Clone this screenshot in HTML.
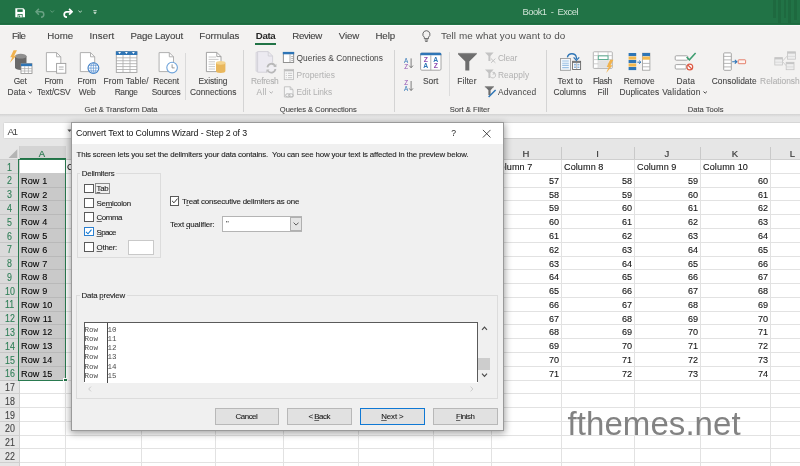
<!DOCTYPE html>
<html><head><meta charset="utf-8"><title>Excel</title>
<style>
html,body{margin:0;padding:0;}
body{width:800px;height:466px;position:relative;overflow:hidden;background:#fff;font-family:"Liberation Sans",sans-serif;}
.t{position:absolute;white-space:pre;display:block;}
.r{position:absolute;display:block;}
u{text-decoration:underline;text-underline-offset:0.6px;text-decoration-thickness:0.5px;text-decoration-color:#666;}
#root{position:absolute;left:0;top:0;width:800px;height:466px;overflow:hidden;background:#fff;will-change:transform;}
</style></head><body>
<div id="root">
<div class="r" style="left:0.00px;top:0.00px;width:800.00px;height:24.50px;background:#217346;"></div>
<div class="r" style="left:0.00px;top:24.50px;width:800.00px;height:89.50px;background:#f3f2f1;"></div>
<div class="r" style="left:0.00px;top:114.00px;width:800.00px;height:3.00px;background:linear-gradient(#d2d2d2,#e6e6e6);"></div>
<div class="r" style="left:0.00px;top:116.50px;width:800.00px;height:30.00px;background:#e6e6e6;"></div>
<div class="r" style="left:773.20px;top:0.00px;width:3.00px;height:18.00px;background:#1e693f;filter:blur(0.4px);"></div>
<div class="r" style="left:778.20px;top:0.00px;width:3.00px;height:24.00px;background:#1e693f;filter:blur(0.4px);"></div>
<div class="r" style="left:783.80px;top:0.00px;width:2.60px;height:18.00px;background:#1e693f;filter:blur(0.4px);"></div>
<div class="r" style="left:788.20px;top:0.00px;width:2.60px;height:24.00px;background:#1e693f;filter:blur(0.4px);"></div>
<div class="r" style="left:793.80px;top:0.00px;width:3.20px;height:20.00px;background:#1e693f;filter:blur(0.4px);"></div>
<div class="r" style="left:0.00px;top:23.40px;width:800.00px;height:1.10px;background:#1d6a3f;"></div>
<div class="r" style="left:0.00px;top:24.50px;width:800.00px;height:1.00px;background:#fbfbfb;"></div>
<div class="r" style="left:0.00px;top:146.30px;width:800.00px;height:13.30px;background:#e6e6e6;"></div>
<div class="r" style="left:0.00px;top:159.60px;width:19.00px;height:306.40px;background:#e6e6e6;"></div>
<div class="r" style="left:19.00px;top:159.60px;width:781.00px;height:306.40px;background:#fff;"></div>
<div class="r" style="left:64.50px;top:147.30px;width:1.00px;height:12.30px;background:#c9c9c9;"></div>
<div class="r" style="left:64.50px;top:159.60px;width:1.00px;height:306.40px;background:#e2e2e2;"></div>
<div class="r" style="left:140.50px;top:147.30px;width:1.00px;height:12.30px;background:#c9c9c9;"></div>
<div class="r" style="left:140.50px;top:159.60px;width:1.00px;height:306.40px;background:#e2e2e2;"></div>
<div class="r" style="left:214.50px;top:147.30px;width:1.00px;height:12.30px;background:#c9c9c9;"></div>
<div class="r" style="left:214.50px;top:159.60px;width:1.00px;height:306.40px;background:#e2e2e2;"></div>
<div class="r" style="left:283.00px;top:147.30px;width:1.00px;height:12.30px;background:#c9c9c9;"></div>
<div class="r" style="left:283.00px;top:159.60px;width:1.00px;height:306.40px;background:#e2e2e2;"></div>
<div class="r" style="left:357.50px;top:147.30px;width:1.00px;height:12.30px;background:#c9c9c9;"></div>
<div class="r" style="left:357.50px;top:159.60px;width:1.00px;height:306.40px;background:#e2e2e2;"></div>
<div class="r" style="left:433.00px;top:147.30px;width:1.00px;height:12.30px;background:#c9c9c9;"></div>
<div class="r" style="left:433.00px;top:159.60px;width:1.00px;height:306.40px;background:#e2e2e2;"></div>
<div class="r" style="left:490.50px;top:147.30px;width:1.00px;height:12.30px;background:#c9c9c9;"></div>
<div class="r" style="left:490.50px;top:159.60px;width:1.00px;height:306.40px;background:#e2e2e2;"></div>
<div class="r" style="left:560.50px;top:147.30px;width:1.00px;height:12.30px;background:#c9c9c9;"></div>
<div class="r" style="left:560.50px;top:159.60px;width:1.00px;height:306.40px;background:#e2e2e2;"></div>
<div class="r" style="left:633.50px;top:147.30px;width:1.00px;height:12.30px;background:#c9c9c9;"></div>
<div class="r" style="left:633.50px;top:159.60px;width:1.00px;height:306.40px;background:#e2e2e2;"></div>
<div class="r" style="left:699.50px;top:147.30px;width:1.00px;height:12.30px;background:#c9c9c9;"></div>
<div class="r" style="left:699.50px;top:159.60px;width:1.00px;height:306.40px;background:#e2e2e2;"></div>
<div class="r" style="left:769.50px;top:147.30px;width:1.00px;height:12.30px;background:#c9c9c9;"></div>
<div class="r" style="left:769.50px;top:159.60px;width:1.00px;height:306.40px;background:#e2e2e2;"></div>
<div class="r" style="left:839.50px;top:147.30px;width:1.00px;height:12.30px;background:#c9c9c9;"></div>
<div class="r" style="left:839.50px;top:159.60px;width:1.00px;height:306.40px;background:#e2e2e2;"></div>
<div class="r" style="left:19.00px;top:172.88px;width:781.00px;height:1.00px;background:#e2e2e2;"></div>
<div class="r" style="left:0.00px;top:172.88px;width:19.00px;height:1.00px;background:#cfcfcf;"></div>
<div class="r" style="left:19.00px;top:186.66px;width:781.00px;height:1.00px;background:#e2e2e2;"></div>
<div class="r" style="left:0.00px;top:186.66px;width:19.00px;height:1.00px;background:#cfcfcf;"></div>
<div class="r" style="left:19.00px;top:200.44px;width:781.00px;height:1.00px;background:#e2e2e2;"></div>
<div class="r" style="left:0.00px;top:200.44px;width:19.00px;height:1.00px;background:#cfcfcf;"></div>
<div class="r" style="left:19.00px;top:214.22px;width:781.00px;height:1.00px;background:#e2e2e2;"></div>
<div class="r" style="left:0.00px;top:214.22px;width:19.00px;height:1.00px;background:#cfcfcf;"></div>
<div class="r" style="left:19.00px;top:228.00px;width:781.00px;height:1.00px;background:#e2e2e2;"></div>
<div class="r" style="left:0.00px;top:228.00px;width:19.00px;height:1.00px;background:#cfcfcf;"></div>
<div class="r" style="left:19.00px;top:241.78px;width:781.00px;height:1.00px;background:#e2e2e2;"></div>
<div class="r" style="left:0.00px;top:241.78px;width:19.00px;height:1.00px;background:#cfcfcf;"></div>
<div class="r" style="left:19.00px;top:255.56px;width:781.00px;height:1.00px;background:#e2e2e2;"></div>
<div class="r" style="left:0.00px;top:255.56px;width:19.00px;height:1.00px;background:#cfcfcf;"></div>
<div class="r" style="left:19.00px;top:269.34px;width:781.00px;height:1.00px;background:#e2e2e2;"></div>
<div class="r" style="left:0.00px;top:269.34px;width:19.00px;height:1.00px;background:#cfcfcf;"></div>
<div class="r" style="left:19.00px;top:283.12px;width:781.00px;height:1.00px;background:#e2e2e2;"></div>
<div class="r" style="left:0.00px;top:283.12px;width:19.00px;height:1.00px;background:#cfcfcf;"></div>
<div class="r" style="left:19.00px;top:296.90px;width:781.00px;height:1.00px;background:#e2e2e2;"></div>
<div class="r" style="left:0.00px;top:296.90px;width:19.00px;height:1.00px;background:#cfcfcf;"></div>
<div class="r" style="left:19.00px;top:310.68px;width:781.00px;height:1.00px;background:#e2e2e2;"></div>
<div class="r" style="left:0.00px;top:310.68px;width:19.00px;height:1.00px;background:#cfcfcf;"></div>
<div class="r" style="left:19.00px;top:324.46px;width:781.00px;height:1.00px;background:#e2e2e2;"></div>
<div class="r" style="left:0.00px;top:324.46px;width:19.00px;height:1.00px;background:#cfcfcf;"></div>
<div class="r" style="left:19.00px;top:338.24px;width:781.00px;height:1.00px;background:#e2e2e2;"></div>
<div class="r" style="left:0.00px;top:338.24px;width:19.00px;height:1.00px;background:#cfcfcf;"></div>
<div class="r" style="left:19.00px;top:352.02px;width:781.00px;height:1.00px;background:#e2e2e2;"></div>
<div class="r" style="left:0.00px;top:352.02px;width:19.00px;height:1.00px;background:#cfcfcf;"></div>
<div class="r" style="left:19.00px;top:365.80px;width:781.00px;height:1.00px;background:#e2e2e2;"></div>
<div class="r" style="left:0.00px;top:365.80px;width:19.00px;height:1.00px;background:#cfcfcf;"></div>
<div class="r" style="left:19.00px;top:379.58px;width:781.00px;height:1.00px;background:#e2e2e2;"></div>
<div class="r" style="left:0.00px;top:379.58px;width:19.00px;height:1.00px;background:#cfcfcf;"></div>
<div class="r" style="left:19.00px;top:393.36px;width:781.00px;height:1.00px;background:#e2e2e2;"></div>
<div class="r" style="left:0.00px;top:393.36px;width:19.00px;height:1.00px;background:#cfcfcf;"></div>
<div class="r" style="left:19.00px;top:407.14px;width:781.00px;height:1.00px;background:#e2e2e2;"></div>
<div class="r" style="left:0.00px;top:407.14px;width:19.00px;height:1.00px;background:#cfcfcf;"></div>
<div class="r" style="left:19.00px;top:420.92px;width:781.00px;height:1.00px;background:#e2e2e2;"></div>
<div class="r" style="left:0.00px;top:420.92px;width:19.00px;height:1.00px;background:#cfcfcf;"></div>
<div class="r" style="left:19.00px;top:434.70px;width:781.00px;height:1.00px;background:#e2e2e2;"></div>
<div class="r" style="left:0.00px;top:434.70px;width:19.00px;height:1.00px;background:#cfcfcf;"></div>
<div class="r" style="left:19.00px;top:448.48px;width:781.00px;height:1.00px;background:#e2e2e2;"></div>
<div class="r" style="left:0.00px;top:448.48px;width:19.00px;height:1.00px;background:#cfcfcf;"></div>
<div class="r" style="left:19.00px;top:462.26px;width:781.00px;height:1.00px;background:#e2e2e2;"></div>
<div class="r" style="left:0.00px;top:462.26px;width:19.00px;height:1.00px;background:#cfcfcf;"></div>
<div class="r" style="left:19.00px;top:476.04px;width:781.00px;height:1.00px;background:#e2e2e2;"></div>
<div class="r" style="left:0.00px;top:476.04px;width:19.00px;height:1.00px;background:#cfcfcf;"></div>
<div class="r" style="left:18.50px;top:146.30px;width:1.00px;height:319.70px;background:#cfcfcf;"></div>
<div class="r" style="left:0.00px;top:159.10px;width:800.00px;height:1.00px;background:#cfcfcf;"></div>
<div class="r" style="left:19.50px;top:146.30px;width:46.00px;height:12.80px;background:#d4d4d4;"></div>
<div class="r" style="left:19.50px;top:158.40px;width:46.00px;height:1.40px;background:#217346;"></div>
<div class="r" style="left:0.00px;top:159.60px;width:18.50px;height:220.48px;background:#dadada;"></div>
<div class="r" style="left:0.00px;top:172.88px;width:18.50px;height:1.00px;background:#c6c6c6;"></div>
<div class="r" style="left:0.00px;top:186.66px;width:18.50px;height:1.00px;background:#c6c6c6;"></div>
<div class="r" style="left:0.00px;top:200.44px;width:18.50px;height:1.00px;background:#c6c6c6;"></div>
<div class="r" style="left:0.00px;top:214.22px;width:18.50px;height:1.00px;background:#c6c6c6;"></div>
<div class="r" style="left:0.00px;top:228.00px;width:18.50px;height:1.00px;background:#c6c6c6;"></div>
<div class="r" style="left:0.00px;top:241.78px;width:18.50px;height:1.00px;background:#c6c6c6;"></div>
<div class="r" style="left:0.00px;top:255.56px;width:18.50px;height:1.00px;background:#c6c6c6;"></div>
<div class="r" style="left:0.00px;top:269.34px;width:18.50px;height:1.00px;background:#c6c6c6;"></div>
<div class="r" style="left:0.00px;top:283.12px;width:18.50px;height:1.00px;background:#c6c6c6;"></div>
<div class="r" style="left:0.00px;top:296.90px;width:18.50px;height:1.00px;background:#c6c6c6;"></div>
<div class="r" style="left:0.00px;top:310.68px;width:18.50px;height:1.00px;background:#c6c6c6;"></div>
<div class="r" style="left:0.00px;top:324.46px;width:18.50px;height:1.00px;background:#c6c6c6;"></div>
<div class="r" style="left:0.00px;top:338.24px;width:18.50px;height:1.00px;background:#c6c6c6;"></div>
<div class="r" style="left:0.00px;top:352.02px;width:18.50px;height:1.00px;background:#c6c6c6;"></div>
<div class="r" style="left:0.00px;top:365.80px;width:18.50px;height:1.00px;background:#c6c6c6;"></div>
<div class="r" style="left:0.00px;top:379.58px;width:18.50px;height:1.00px;background:#c6c6c6;"></div>
<div class="r" style="left:19.50px;top:173.38px;width:46.00px;height:206.70px;background:#c9c9c9;"></div>
<div class="r" style="left:19.50px;top:186.66px;width:46.00px;height:1.00px;background:#b9b9b9;"></div>
<div class="r" style="left:19.50px;top:200.44px;width:46.00px;height:1.00px;background:#b9b9b9;"></div>
<div class="r" style="left:19.50px;top:214.22px;width:46.00px;height:1.00px;background:#b9b9b9;"></div>
<div class="r" style="left:19.50px;top:228.00px;width:46.00px;height:1.00px;background:#b9b9b9;"></div>
<div class="r" style="left:19.50px;top:241.78px;width:46.00px;height:1.00px;background:#b9b9b9;"></div>
<div class="r" style="left:19.50px;top:255.56px;width:46.00px;height:1.00px;background:#b9b9b9;"></div>
<div class="r" style="left:19.50px;top:269.34px;width:46.00px;height:1.00px;background:#b9b9b9;"></div>
<div class="r" style="left:19.50px;top:283.12px;width:46.00px;height:1.00px;background:#b9b9b9;"></div>
<div class="r" style="left:19.50px;top:296.90px;width:46.00px;height:1.00px;background:#b9b9b9;"></div>
<div class="r" style="left:19.50px;top:310.68px;width:46.00px;height:1.00px;background:#b9b9b9;"></div>
<div class="r" style="left:19.50px;top:324.46px;width:46.00px;height:1.00px;background:#b9b9b9;"></div>
<div class="r" style="left:19.50px;top:338.24px;width:46.00px;height:1.00px;background:#b9b9b9;"></div>
<div class="r" style="left:19.50px;top:352.02px;width:46.00px;height:1.00px;background:#b9b9b9;"></div>
<div class="r" style="left:19.50px;top:365.80px;width:46.00px;height:1.00px;background:#b9b9b9;"></div>
<div class="r" style="left:18.30px;top:158.90px;width:48.00px;height:221.88px;box-sizing:border-box;border:1.2px solid #2a7a50;"></div>
<div class="r" style="left:64.40px;top:378.78px;width:2.70px;height:2.70px;background:#217346;outline:0.5px solid #fff;"></div>
<svg class="r" style="left:8.00px;top:148.50px" width="10" height="9.5" viewBox="0 0 10 9.5"><path d="M9.3 0.3V9H0.6Z" fill="#b4b4b4"/></svg>
<span class="t" style="left:38.83px;top:149.06px;font-size:9.50px;line-height:9.50px;color:#2a7a50;-webkit-text-stroke:0.2px;">A</span>
<span class="t" style="left:522.57px;top:149.06px;font-size:9.50px;line-height:9.50px;color:#3a3a3a;-webkit-text-stroke:0.2px;">H</span>
<span class="t" style="left:596.18px;top:149.06px;font-size:9.50px;line-height:9.50px;color:#3a3a3a;-webkit-text-stroke:0.2px;">I</span>
<span class="t" style="left:664.62px;top:149.06px;font-size:9.50px;line-height:9.50px;color:#3a3a3a;-webkit-text-stroke:0.2px;">J</span>
<span class="t" style="left:731.83px;top:149.06px;font-size:9.50px;line-height:9.50px;color:#3a3a3a;-webkit-text-stroke:0.2px;">K</span>
<span class="t" style="left:789.86px;top:149.06px;font-size:9.50px;line-height:9.50px;color:#3a3a3a;-webkit-text-stroke:0.2px;">L</span>
<span class="t" style="left:7.24px;top:162.66px;font-size:10.30px;line-height:10.30px;color:#2f7f57;transform:scaleX(0.860);transform-origin:0 50%;-webkit-text-stroke:0.12px;">1</span>
<span class="t" style="left:7.24px;top:176.44px;font-size:10.30px;line-height:10.30px;color:#2f7f57;transform:scaleX(0.860);transform-origin:0 50%;-webkit-text-stroke:0.12px;">2</span>
<span class="t" style="left:7.24px;top:190.22px;font-size:10.30px;line-height:10.30px;color:#2f7f57;transform:scaleX(0.860);transform-origin:0 50%;-webkit-text-stroke:0.12px;">3</span>
<span class="t" style="left:7.24px;top:204.00px;font-size:10.30px;line-height:10.30px;color:#2f7f57;transform:scaleX(0.860);transform-origin:0 50%;-webkit-text-stroke:0.12px;">4</span>
<span class="t" style="left:7.24px;top:217.78px;font-size:10.30px;line-height:10.30px;color:#2f7f57;transform:scaleX(0.860);transform-origin:0 50%;-webkit-text-stroke:0.12px;">5</span>
<span class="t" style="left:7.24px;top:231.56px;font-size:10.30px;line-height:10.30px;color:#2f7f57;transform:scaleX(0.860);transform-origin:0 50%;-webkit-text-stroke:0.12px;">6</span>
<span class="t" style="left:7.24px;top:245.34px;font-size:10.30px;line-height:10.30px;color:#2f7f57;transform:scaleX(0.860);transform-origin:0 50%;-webkit-text-stroke:0.12px;">7</span>
<span class="t" style="left:7.24px;top:259.12px;font-size:10.30px;line-height:10.30px;color:#2f7f57;transform:scaleX(0.860);transform-origin:0 50%;-webkit-text-stroke:0.12px;">8</span>
<span class="t" style="left:7.24px;top:272.90px;font-size:10.30px;line-height:10.30px;color:#2f7f57;transform:scaleX(0.860);transform-origin:0 50%;-webkit-text-stroke:0.12px;">9</span>
<span class="t" style="left:4.77px;top:286.68px;font-size:10.30px;line-height:10.30px;color:#2f7f57;letter-spacing:-0.000px;transform:scaleX(0.860);transform-origin:0 50%;-webkit-text-stroke:0.12px;">10</span>
<span class="t" style="left:5.10px;top:300.46px;font-size:10.30px;line-height:10.30px;color:#2f7f57;transform:scaleX(0.860);transform-origin:0 50%;-webkit-text-stroke:0.12px;">11</span>
<span class="t" style="left:4.77px;top:314.24px;font-size:10.30px;line-height:10.30px;color:#2f7f57;letter-spacing:-0.000px;transform:scaleX(0.860);transform-origin:0 50%;-webkit-text-stroke:0.12px;">12</span>
<span class="t" style="left:4.77px;top:328.02px;font-size:10.30px;line-height:10.30px;color:#2f7f57;letter-spacing:-0.000px;transform:scaleX(0.860);transform-origin:0 50%;-webkit-text-stroke:0.12px;">13</span>
<span class="t" style="left:4.77px;top:341.80px;font-size:10.30px;line-height:10.30px;color:#2f7f57;letter-spacing:-0.000px;transform:scaleX(0.860);transform-origin:0 50%;-webkit-text-stroke:0.12px;">14</span>
<span class="t" style="left:4.77px;top:355.58px;font-size:10.30px;line-height:10.30px;color:#2f7f57;letter-spacing:-0.000px;transform:scaleX(0.860);transform-origin:0 50%;-webkit-text-stroke:0.12px;">15</span>
<span class="t" style="left:4.77px;top:369.36px;font-size:10.30px;line-height:10.30px;color:#2f7f57;letter-spacing:-0.000px;transform:scaleX(0.860);transform-origin:0 50%;-webkit-text-stroke:0.12px;">16</span>
<span class="t" style="left:4.77px;top:383.14px;font-size:10.30px;line-height:10.30px;color:#444;letter-spacing:-0.000px;transform:scaleX(0.860);transform-origin:0 50%;-webkit-text-stroke:0.12px;">17</span>
<span class="t" style="left:4.77px;top:396.92px;font-size:10.30px;line-height:10.30px;color:#444;letter-spacing:-0.000px;transform:scaleX(0.860);transform-origin:0 50%;-webkit-text-stroke:0.12px;">18</span>
<span class="t" style="left:4.77px;top:410.70px;font-size:10.30px;line-height:10.30px;color:#444;letter-spacing:-0.000px;transform:scaleX(0.860);transform-origin:0 50%;-webkit-text-stroke:0.12px;">19</span>
<span class="t" style="left:4.77px;top:424.48px;font-size:10.30px;line-height:10.30px;color:#444;letter-spacing:-0.000px;transform:scaleX(0.860);transform-origin:0 50%;-webkit-text-stroke:0.12px;">20</span>
<span class="t" style="left:4.77px;top:438.26px;font-size:10.30px;line-height:10.30px;color:#444;letter-spacing:-0.000px;transform:scaleX(0.860);transform-origin:0 50%;-webkit-text-stroke:0.12px;">21</span>
<span class="t" style="left:4.77px;top:452.04px;font-size:10.30px;line-height:10.30px;color:#444;letter-spacing:-0.000px;transform:scaleX(0.860);transform-origin:0 50%;-webkit-text-stroke:0.12px;">22</span>
<span class="t" style="left:20.90px;top:175.83px;font-size:9.90px;line-height:9.90px;color:#000;letter-spacing:0.132px;transform:scaleX(0.920);transform-origin:0 50%;-webkit-text-stroke:0.1px;">Row 1</span>
<span class="t" style="left:20.90px;top:189.61px;font-size:9.90px;line-height:9.90px;color:#000;letter-spacing:0.132px;transform:scaleX(0.920);transform-origin:0 50%;-webkit-text-stroke:0.1px;">Row 2</span>
<span class="t" style="left:20.90px;top:203.39px;font-size:9.90px;line-height:9.90px;color:#000;letter-spacing:0.132px;transform:scaleX(0.920);transform-origin:0 50%;-webkit-text-stroke:0.1px;">Row 3</span>
<span class="t" style="left:20.90px;top:217.17px;font-size:9.90px;line-height:9.90px;color:#000;letter-spacing:0.132px;transform:scaleX(0.920);transform-origin:0 50%;-webkit-text-stroke:0.1px;">Row 4</span>
<span class="t" style="left:20.90px;top:230.95px;font-size:9.90px;line-height:9.90px;color:#000;letter-spacing:0.132px;transform:scaleX(0.920);transform-origin:0 50%;-webkit-text-stroke:0.1px;">Row 5</span>
<span class="t" style="left:20.90px;top:244.73px;font-size:9.90px;line-height:9.90px;color:#000;letter-spacing:0.132px;transform:scaleX(0.920);transform-origin:0 50%;-webkit-text-stroke:0.1px;">Row 6</span>
<span class="t" style="left:20.90px;top:258.51px;font-size:9.90px;line-height:9.90px;color:#000;letter-spacing:0.132px;transform:scaleX(0.920);transform-origin:0 50%;-webkit-text-stroke:0.1px;">Row 7</span>
<span class="t" style="left:20.90px;top:272.29px;font-size:9.90px;line-height:9.90px;color:#000;letter-spacing:0.132px;transform:scaleX(0.920);transform-origin:0 50%;-webkit-text-stroke:0.1px;">Row 8</span>
<span class="t" style="left:20.90px;top:286.07px;font-size:9.90px;line-height:9.90px;color:#000;letter-spacing:0.132px;transform:scaleX(0.920);transform-origin:0 50%;-webkit-text-stroke:0.1px;">Row 9</span>
<span class="t" style="left:20.90px;top:299.85px;font-size:9.90px;line-height:9.90px;color:#000;letter-spacing:0.135px;transform:scaleX(0.920);transform-origin:0 50%;-webkit-text-stroke:0.1px;">Row 10</span>
<span class="t" style="left:20.90px;top:313.63px;font-size:9.90px;line-height:9.90px;color:#000;letter-spacing:0.282px;transform:scaleX(0.920);transform-origin:0 50%;-webkit-text-stroke:0.1px;">Row 11</span>
<span class="t" style="left:20.90px;top:327.41px;font-size:9.90px;line-height:9.90px;color:#000;letter-spacing:0.135px;transform:scaleX(0.920);transform-origin:0 50%;-webkit-text-stroke:0.1px;">Row 12</span>
<span class="t" style="left:20.90px;top:341.19px;font-size:9.90px;line-height:9.90px;color:#000;letter-spacing:0.135px;transform:scaleX(0.920);transform-origin:0 50%;-webkit-text-stroke:0.1px;">Row 13</span>
<span class="t" style="left:20.90px;top:354.97px;font-size:9.90px;line-height:9.90px;color:#000;letter-spacing:0.135px;transform:scaleX(0.920);transform-origin:0 50%;-webkit-text-stroke:0.1px;">Row 14</span>
<span class="t" style="left:20.90px;top:368.75px;font-size:9.90px;line-height:9.90px;color:#000;letter-spacing:0.135px;transform:scaleX(0.920);transform-origin:0 50%;-webkit-text-stroke:0.1px;">Row 15</span>
<span class="t" style="left:66.50px;top:162.05px;font-size:9.90px;line-height:9.90px;color:#111;transform:scaleX(0.920);transform-origin:0 50%;-webkit-text-stroke:0.1px;">C</span>
<span class="t" style="left:492.60px;top:162.05px;font-size:9.90px;line-height:9.90px;color:#111;letter-spacing:0.066px;transform:scaleX(0.920);transform-origin:0 50%;-webkit-text-stroke:0.1px;">Column 7</span>
<span class="t" style="left:563.50px;top:162.05px;font-size:9.90px;line-height:9.90px;color:#111;letter-spacing:0.081px;transform:scaleX(0.920);transform-origin:0 50%;-webkit-text-stroke:0.1px;">Column 8</span>
<span class="t" style="left:636.50px;top:162.05px;font-size:9.90px;line-height:9.90px;color:#111;letter-spacing:0.081px;transform:scaleX(0.920);transform-origin:0 50%;-webkit-text-stroke:0.1px;">Column 9</span>
<span class="t" style="left:702.50px;top:162.05px;font-size:9.90px;line-height:9.90px;color:#111;letter-spacing:0.130px;transform:scaleX(0.920);transform-origin:0 50%;-webkit-text-stroke:0.1px;">Column 10</span>
<span class="t" style="left:548.80px;top:175.83px;font-size:9.90px;line-height:9.90px;color:#111;letter-spacing:0.076px;transform:scaleX(0.920);transform-origin:0 50%;-webkit-text-stroke:0.1px;">57</span>
<span class="t" style="left:621.80px;top:175.83px;font-size:9.90px;line-height:9.90px;color:#111;letter-spacing:0.076px;transform:scaleX(0.920);transform-origin:0 50%;-webkit-text-stroke:0.1px;">58</span>
<span class="t" style="left:687.80px;top:175.83px;font-size:9.90px;line-height:9.90px;color:#111;letter-spacing:0.076px;transform:scaleX(0.920);transform-origin:0 50%;-webkit-text-stroke:0.1px;">59</span>
<span class="t" style="left:757.80px;top:175.83px;font-size:9.90px;line-height:9.90px;color:#111;letter-spacing:0.076px;transform:scaleX(0.920);transform-origin:0 50%;-webkit-text-stroke:0.1px;">60</span>
<span class="t" style="left:548.80px;top:189.61px;font-size:9.90px;line-height:9.90px;color:#111;letter-spacing:0.076px;transform:scaleX(0.920);transform-origin:0 50%;-webkit-text-stroke:0.1px;">58</span>
<span class="t" style="left:621.80px;top:189.61px;font-size:9.90px;line-height:9.90px;color:#111;letter-spacing:0.076px;transform:scaleX(0.920);transform-origin:0 50%;-webkit-text-stroke:0.1px;">59</span>
<span class="t" style="left:687.80px;top:189.61px;font-size:9.90px;line-height:9.90px;color:#111;letter-spacing:0.076px;transform:scaleX(0.920);transform-origin:0 50%;-webkit-text-stroke:0.1px;">60</span>
<span class="t" style="left:757.80px;top:189.61px;font-size:9.90px;line-height:9.90px;color:#111;letter-spacing:0.076px;transform:scaleX(0.920);transform-origin:0 50%;-webkit-text-stroke:0.1px;">61</span>
<span class="t" style="left:548.80px;top:203.39px;font-size:9.90px;line-height:9.90px;color:#111;letter-spacing:0.076px;transform:scaleX(0.920);transform-origin:0 50%;-webkit-text-stroke:0.1px;">59</span>
<span class="t" style="left:621.80px;top:203.39px;font-size:9.90px;line-height:9.90px;color:#111;letter-spacing:0.076px;transform:scaleX(0.920);transform-origin:0 50%;-webkit-text-stroke:0.1px;">60</span>
<span class="t" style="left:687.80px;top:203.39px;font-size:9.90px;line-height:9.90px;color:#111;letter-spacing:0.076px;transform:scaleX(0.920);transform-origin:0 50%;-webkit-text-stroke:0.1px;">61</span>
<span class="t" style="left:757.80px;top:203.39px;font-size:9.90px;line-height:9.90px;color:#111;letter-spacing:0.076px;transform:scaleX(0.920);transform-origin:0 50%;-webkit-text-stroke:0.1px;">62</span>
<span class="t" style="left:548.80px;top:217.17px;font-size:9.90px;line-height:9.90px;color:#111;letter-spacing:0.076px;transform:scaleX(0.920);transform-origin:0 50%;-webkit-text-stroke:0.1px;">60</span>
<span class="t" style="left:621.80px;top:217.17px;font-size:9.90px;line-height:9.90px;color:#111;letter-spacing:0.076px;transform:scaleX(0.920);transform-origin:0 50%;-webkit-text-stroke:0.1px;">61</span>
<span class="t" style="left:687.80px;top:217.17px;font-size:9.90px;line-height:9.90px;color:#111;letter-spacing:0.076px;transform:scaleX(0.920);transform-origin:0 50%;-webkit-text-stroke:0.1px;">62</span>
<span class="t" style="left:757.80px;top:217.17px;font-size:9.90px;line-height:9.90px;color:#111;letter-spacing:0.076px;transform:scaleX(0.920);transform-origin:0 50%;-webkit-text-stroke:0.1px;">63</span>
<span class="t" style="left:548.80px;top:230.95px;font-size:9.90px;line-height:9.90px;color:#111;letter-spacing:0.076px;transform:scaleX(0.920);transform-origin:0 50%;-webkit-text-stroke:0.1px;">61</span>
<span class="t" style="left:621.80px;top:230.95px;font-size:9.90px;line-height:9.90px;color:#111;letter-spacing:0.076px;transform:scaleX(0.920);transform-origin:0 50%;-webkit-text-stroke:0.1px;">62</span>
<span class="t" style="left:687.80px;top:230.95px;font-size:9.90px;line-height:9.90px;color:#111;letter-spacing:0.076px;transform:scaleX(0.920);transform-origin:0 50%;-webkit-text-stroke:0.1px;">63</span>
<span class="t" style="left:757.80px;top:230.95px;font-size:9.90px;line-height:9.90px;color:#111;letter-spacing:0.076px;transform:scaleX(0.920);transform-origin:0 50%;-webkit-text-stroke:0.1px;">64</span>
<span class="t" style="left:548.80px;top:244.73px;font-size:9.90px;line-height:9.90px;color:#111;letter-spacing:0.076px;transform:scaleX(0.920);transform-origin:0 50%;-webkit-text-stroke:0.1px;">62</span>
<span class="t" style="left:621.80px;top:244.73px;font-size:9.90px;line-height:9.90px;color:#111;letter-spacing:0.076px;transform:scaleX(0.920);transform-origin:0 50%;-webkit-text-stroke:0.1px;">63</span>
<span class="t" style="left:687.80px;top:244.73px;font-size:9.90px;line-height:9.90px;color:#111;letter-spacing:0.076px;transform:scaleX(0.920);transform-origin:0 50%;-webkit-text-stroke:0.1px;">64</span>
<span class="t" style="left:757.80px;top:244.73px;font-size:9.90px;line-height:9.90px;color:#111;letter-spacing:0.076px;transform:scaleX(0.920);transform-origin:0 50%;-webkit-text-stroke:0.1px;">65</span>
<span class="t" style="left:548.80px;top:258.51px;font-size:9.90px;line-height:9.90px;color:#111;letter-spacing:0.076px;transform:scaleX(0.920);transform-origin:0 50%;-webkit-text-stroke:0.1px;">63</span>
<span class="t" style="left:621.80px;top:258.51px;font-size:9.90px;line-height:9.90px;color:#111;letter-spacing:0.076px;transform:scaleX(0.920);transform-origin:0 50%;-webkit-text-stroke:0.1px;">64</span>
<span class="t" style="left:687.80px;top:258.51px;font-size:9.90px;line-height:9.90px;color:#111;letter-spacing:0.076px;transform:scaleX(0.920);transform-origin:0 50%;-webkit-text-stroke:0.1px;">65</span>
<span class="t" style="left:757.80px;top:258.51px;font-size:9.90px;line-height:9.90px;color:#111;letter-spacing:0.076px;transform:scaleX(0.920);transform-origin:0 50%;-webkit-text-stroke:0.1px;">66</span>
<span class="t" style="left:548.80px;top:272.29px;font-size:9.90px;line-height:9.90px;color:#111;letter-spacing:0.076px;transform:scaleX(0.920);transform-origin:0 50%;-webkit-text-stroke:0.1px;">64</span>
<span class="t" style="left:621.80px;top:272.29px;font-size:9.90px;line-height:9.90px;color:#111;letter-spacing:0.076px;transform:scaleX(0.920);transform-origin:0 50%;-webkit-text-stroke:0.1px;">65</span>
<span class="t" style="left:687.80px;top:272.29px;font-size:9.90px;line-height:9.90px;color:#111;letter-spacing:0.076px;transform:scaleX(0.920);transform-origin:0 50%;-webkit-text-stroke:0.1px;">66</span>
<span class="t" style="left:757.80px;top:272.29px;font-size:9.90px;line-height:9.90px;color:#111;letter-spacing:0.076px;transform:scaleX(0.920);transform-origin:0 50%;-webkit-text-stroke:0.1px;">67</span>
<span class="t" style="left:548.80px;top:286.07px;font-size:9.90px;line-height:9.90px;color:#111;letter-spacing:0.076px;transform:scaleX(0.920);transform-origin:0 50%;-webkit-text-stroke:0.1px;">65</span>
<span class="t" style="left:621.80px;top:286.07px;font-size:9.90px;line-height:9.90px;color:#111;letter-spacing:0.076px;transform:scaleX(0.920);transform-origin:0 50%;-webkit-text-stroke:0.1px;">66</span>
<span class="t" style="left:687.80px;top:286.07px;font-size:9.90px;line-height:9.90px;color:#111;letter-spacing:0.076px;transform:scaleX(0.920);transform-origin:0 50%;-webkit-text-stroke:0.1px;">67</span>
<span class="t" style="left:757.80px;top:286.07px;font-size:9.90px;line-height:9.90px;color:#111;letter-spacing:0.076px;transform:scaleX(0.920);transform-origin:0 50%;-webkit-text-stroke:0.1px;">68</span>
<span class="t" style="left:548.80px;top:299.85px;font-size:9.90px;line-height:9.90px;color:#111;letter-spacing:0.076px;transform:scaleX(0.920);transform-origin:0 50%;-webkit-text-stroke:0.1px;">66</span>
<span class="t" style="left:621.80px;top:299.85px;font-size:9.90px;line-height:9.90px;color:#111;letter-spacing:0.076px;transform:scaleX(0.920);transform-origin:0 50%;-webkit-text-stroke:0.1px;">67</span>
<span class="t" style="left:687.80px;top:299.85px;font-size:9.90px;line-height:9.90px;color:#111;letter-spacing:0.076px;transform:scaleX(0.920);transform-origin:0 50%;-webkit-text-stroke:0.1px;">68</span>
<span class="t" style="left:757.80px;top:299.85px;font-size:9.90px;line-height:9.90px;color:#111;letter-spacing:0.076px;transform:scaleX(0.920);transform-origin:0 50%;-webkit-text-stroke:0.1px;">69</span>
<span class="t" style="left:548.80px;top:313.63px;font-size:9.90px;line-height:9.90px;color:#111;letter-spacing:0.076px;transform:scaleX(0.920);transform-origin:0 50%;-webkit-text-stroke:0.1px;">67</span>
<span class="t" style="left:621.80px;top:313.63px;font-size:9.90px;line-height:9.90px;color:#111;letter-spacing:0.076px;transform:scaleX(0.920);transform-origin:0 50%;-webkit-text-stroke:0.1px;">68</span>
<span class="t" style="left:687.80px;top:313.63px;font-size:9.90px;line-height:9.90px;color:#111;letter-spacing:0.076px;transform:scaleX(0.920);transform-origin:0 50%;-webkit-text-stroke:0.1px;">69</span>
<span class="t" style="left:757.80px;top:313.63px;font-size:9.90px;line-height:9.90px;color:#111;letter-spacing:0.076px;transform:scaleX(0.920);transform-origin:0 50%;-webkit-text-stroke:0.1px;">70</span>
<span class="t" style="left:548.80px;top:327.41px;font-size:9.90px;line-height:9.90px;color:#111;letter-spacing:0.076px;transform:scaleX(0.920);transform-origin:0 50%;-webkit-text-stroke:0.1px;">68</span>
<span class="t" style="left:621.80px;top:327.41px;font-size:9.90px;line-height:9.90px;color:#111;letter-spacing:0.076px;transform:scaleX(0.920);transform-origin:0 50%;-webkit-text-stroke:0.1px;">69</span>
<span class="t" style="left:687.80px;top:327.41px;font-size:9.90px;line-height:9.90px;color:#111;letter-spacing:0.076px;transform:scaleX(0.920);transform-origin:0 50%;-webkit-text-stroke:0.1px;">70</span>
<span class="t" style="left:757.80px;top:327.41px;font-size:9.90px;line-height:9.90px;color:#111;letter-spacing:0.076px;transform:scaleX(0.920);transform-origin:0 50%;-webkit-text-stroke:0.1px;">71</span>
<span class="t" style="left:548.80px;top:341.19px;font-size:9.90px;line-height:9.90px;color:#111;letter-spacing:0.076px;transform:scaleX(0.920);transform-origin:0 50%;-webkit-text-stroke:0.1px;">69</span>
<span class="t" style="left:621.80px;top:341.19px;font-size:9.90px;line-height:9.90px;color:#111;letter-spacing:0.076px;transform:scaleX(0.920);transform-origin:0 50%;-webkit-text-stroke:0.1px;">70</span>
<span class="t" style="left:687.80px;top:341.19px;font-size:9.90px;line-height:9.90px;color:#111;letter-spacing:0.076px;transform:scaleX(0.920);transform-origin:0 50%;-webkit-text-stroke:0.1px;">71</span>
<span class="t" style="left:757.80px;top:341.19px;font-size:9.90px;line-height:9.90px;color:#111;letter-spacing:0.076px;transform:scaleX(0.920);transform-origin:0 50%;-webkit-text-stroke:0.1px;">72</span>
<span class="t" style="left:548.80px;top:354.97px;font-size:9.90px;line-height:9.90px;color:#111;letter-spacing:0.076px;transform:scaleX(0.920);transform-origin:0 50%;-webkit-text-stroke:0.1px;">70</span>
<span class="t" style="left:621.80px;top:354.97px;font-size:9.90px;line-height:9.90px;color:#111;letter-spacing:0.076px;transform:scaleX(0.920);transform-origin:0 50%;-webkit-text-stroke:0.1px;">71</span>
<span class="t" style="left:687.80px;top:354.97px;font-size:9.90px;line-height:9.90px;color:#111;letter-spacing:0.076px;transform:scaleX(0.920);transform-origin:0 50%;-webkit-text-stroke:0.1px;">72</span>
<span class="t" style="left:757.80px;top:354.97px;font-size:9.90px;line-height:9.90px;color:#111;letter-spacing:0.076px;transform:scaleX(0.920);transform-origin:0 50%;-webkit-text-stroke:0.1px;">73</span>
<span class="t" style="left:548.80px;top:368.75px;font-size:9.90px;line-height:9.90px;color:#111;letter-spacing:0.076px;transform:scaleX(0.920);transform-origin:0 50%;-webkit-text-stroke:0.1px;">71</span>
<span class="t" style="left:621.80px;top:368.75px;font-size:9.90px;line-height:9.90px;color:#111;letter-spacing:0.076px;transform:scaleX(0.920);transform-origin:0 50%;-webkit-text-stroke:0.1px;">72</span>
<span class="t" style="left:687.80px;top:368.75px;font-size:9.90px;line-height:9.90px;color:#111;letter-spacing:0.076px;transform:scaleX(0.920);transform-origin:0 50%;-webkit-text-stroke:0.1px;">73</span>
<span class="t" style="left:757.80px;top:368.75px;font-size:9.90px;line-height:9.90px;color:#111;letter-spacing:0.076px;transform:scaleX(0.920);transform-origin:0 50%;-webkit-text-stroke:0.1px;">74</span>
<span class="t" style="left:522.50px;top:7.11px;font-size:9.40px;line-height:9.40px;color:#cfe3d6;letter-spacing:-0.501px;">Book1  -  Excel</span>
<svg class="r" style="left:15.00px;top:8.30px" width="10.4" height="9.6" viewBox="0 0 10.4 9.6"><path d="M0.3 0.3H8.4L10.1 2V9.3H0.3Z" fill="#fff"/><rect x="2.3" y="1.3" width="5.4" height="2.6" fill="#217346"/><rect x="2.6" y="6" width="5" height="3.3" fill="#217346"/><rect x="3.4" y="6.8" width="3.4" height="2.5" fill="#fff"/><rect x="4.1" y="7.5" width="1.1" height="1.8" fill="#217346"/></svg>
<svg class="r" style="left:35.00px;top:8.00px" width="11" height="10" viewBox="0 0 11 10"><path d="M1.2 3.8H6.2C9.6 3.8 9.8 8.9 6 9.2" fill="none" stroke="#69a283" stroke-width="1.5"/><path d="M3.9 0.9L1 3.8L3.9 6.7" fill="none" stroke="#69a283" stroke-width="1.5"/></svg>
<svg class="r" style="left:50.30px;top:10.40px" width="4.4" height="3.2" viewBox="0 0 4.4 3.2"><path d="M0.4 0.5L2.2 2.4L4 0.5" fill="none" stroke="#69a283" stroke-width="0.9"/></svg>
<svg class="r" style="left:62.00px;top:8.00px" width="11" height="10" viewBox="0 0 11 10"><path d="M9.8 3.8H4.8C1.4 3.8 1.2 8.9 5 9.2" fill="none" stroke="#fff" stroke-width="1.7"/><path d="M7.1 0.9L10 3.8L7.1 6.7" fill="none" stroke="#fff" stroke-width="1.7"/></svg>
<svg class="r" style="left:77.80px;top:10.40px" width="4.4" height="3.2" viewBox="0 0 4.4 3.2"><path d="M0.4 0.5L2.2 2.4L4 0.5" fill="none" stroke="#cfe3d6" stroke-width="0.9"/></svg>
<svg class="r" style="left:92.50px;top:10.00px" width="4" height="5" viewBox="0 0 4 5"><rect x="0.3" y="0.3" width="3.4" height="0.9" fill="#e8f0ea"/><path d="M0.3 2.2H3.7L2 4.2Z" fill="#e8f0ea"/></svg>
<span class="t" style="left:12.00px;top:31.26px;font-size:9.70px;line-height:9.70px;color:#444;letter-spacing:-0.543px;-webkit-text-stroke:0.12px;">File</span>
<span class="t" style="left:47.20px;top:31.26px;font-size:9.70px;line-height:9.70px;color:#444;letter-spacing:0.076px;-webkit-text-stroke:0.12px;">Home</span>
<span class="t" style="left:89.60px;top:31.26px;font-size:9.70px;line-height:9.70px;color:#444;letter-spacing:0.068px;-webkit-text-stroke:0.12px;">Insert</span>
<span class="t" style="left:130.50px;top:31.26px;font-size:9.70px;line-height:9.70px;color:#444;letter-spacing:-0.177px;-webkit-text-stroke:0.12px;">Page Layout</span>
<span class="t" style="left:199.30px;top:31.26px;font-size:9.70px;line-height:9.70px;color:#444;letter-spacing:-0.046px;-webkit-text-stroke:0.12px;">Formulas</span>
<span class="t" style="left:292.30px;top:31.26px;font-size:9.70px;line-height:9.70px;color:#444;letter-spacing:-0.381px;-webkit-text-stroke:0.12px;">Review</span>
<span class="t" style="left:338.80px;top:31.26px;font-size:9.70px;line-height:9.70px;color:#444;letter-spacing:-0.116px;-webkit-text-stroke:0.12px;">View</span>
<span class="t" style="left:375.40px;top:31.26px;font-size:9.70px;line-height:9.70px;color:#444;letter-spacing:-0.050px;-webkit-text-stroke:0.12px;">Help</span>
<span class="t" style="left:255.70px;top:31.26px;font-size:9.70px;line-height:9.70px;color:#262626;letter-spacing:-0.308px;font-weight:bold;">Data</span>
<span class="t" style="left:440.90px;top:31.16px;font-size:9.90px;line-height:9.90px;color:#4e4e4e;letter-spacing:0.098px;">Tell me what you want to do</span>
<div class="r" style="left:255.30px;top:43.10px;width:20.80px;height:1.70px;background:#217346;"></div>
<svg class="r" style="left:421.00px;top:30.00px" width="11" height="12.5" viewBox="0 0 11 12.5"><path d="M5.4 0.7A3.6 3.6 0 0 0 3.3 7.2V8.6H7.5V7.2A3.6 3.6 0 0 0 5.4 0.7Z" fill="none" stroke="#555" stroke-width="0.9"/><path d="M3.7 10H7.1M4.2 11.4H6.6" stroke="#555" stroke-width="0.9"/></svg>
<span class="t" style="left:13.80px;top:76.80px;font-size:8.40px;line-height:8.40px;color:#444;letter-spacing:-0.219px;-webkit-text-stroke:0.08px;">Get</span>
<span class="t" style="left:7.50px;top:88.20px;font-size:8.40px;line-height:8.40px;color:#444;letter-spacing:0.186px;-webkit-text-stroke:0.08px;">Data</span>
<span class="t" style="left:44.40px;top:76.80px;font-size:8.40px;line-height:8.40px;color:#444;letter-spacing:-0.265px;-webkit-text-stroke:0.08px;">From</span>
<span class="t" style="left:37.10px;top:88.20px;font-size:8.40px;line-height:8.40px;color:#444;letter-spacing:-0.187px;-webkit-text-stroke:0.08px;">Text/CSV</span>
<span class="t" style="left:77.50px;top:76.80px;font-size:8.40px;line-height:8.40px;color:#444;letter-spacing:-0.165px;-webkit-text-stroke:0.08px;">From</span>
<span class="t" style="left:78.80px;top:88.20px;font-size:8.40px;line-height:8.40px;color:#444;letter-spacing:-0.159px;-webkit-text-stroke:0.08px;">Web</span>
<span class="t" style="left:103.60px;top:76.80px;font-size:8.40px;line-height:8.40px;color:#444;letter-spacing:0.081px;-webkit-text-stroke:0.08px;">From Table/</span>
<span class="t" style="left:114.70px;top:88.20px;font-size:8.40px;line-height:8.40px;color:#444;letter-spacing:-0.363px;-webkit-text-stroke:0.08px;">Range</span>
<span class="t" style="left:153.30px;top:76.80px;font-size:8.40px;line-height:8.40px;color:#444;letter-spacing:-0.143px;-webkit-text-stroke:0.08px;">Recent</span>
<span class="t" style="left:151.80px;top:88.20px;font-size:8.40px;line-height:8.40px;color:#444;letter-spacing:-0.319px;-webkit-text-stroke:0.08px;">Sources</span>
<span class="t" style="left:198.50px;top:76.80px;font-size:8.40px;line-height:8.40px;color:#444;letter-spacing:-0.059px;-webkit-text-stroke:0.08px;">Existing</span>
<span class="t" style="left:190.00px;top:88.20px;font-size:8.40px;line-height:8.40px;color:#444;letter-spacing:-0.019px;-webkit-text-stroke:0.08px;">Connections</span>
<span class="t" style="left:251.00px;top:76.80px;font-size:8.40px;line-height:8.40px;color:#b1b1b1;letter-spacing:-0.268px;-webkit-text-stroke:0.08px;">Refresh</span>
<span class="t" style="left:256.50px;top:88.20px;font-size:8.40px;line-height:8.40px;color:#b1b1b1;letter-spacing:0.332px;-webkit-text-stroke:0.08px;">All</span>
<span class="t" style="left:423.00px;top:76.80px;font-size:8.40px;line-height:8.40px;color:#444;letter-spacing:-0.002px;-webkit-text-stroke:0.08px;">Sort</span>
<span class="t" style="left:457.20px;top:76.80px;font-size:8.40px;line-height:8.40px;color:#444;letter-spacing:0.127px;-webkit-text-stroke:0.08px;">Filter</span>
<span class="t" style="left:557.60px;top:76.80px;font-size:8.40px;line-height:8.40px;color:#444;letter-spacing:0.059px;-webkit-text-stroke:0.08px;">Text to</span>
<span class="t" style="left:553.60px;top:88.20px;font-size:8.40px;line-height:8.40px;color:#444;letter-spacing:-0.091px;-webkit-text-stroke:0.08px;">Columns</span>
<span class="t" style="left:593.00px;top:76.80px;font-size:8.40px;line-height:8.40px;color:#444;letter-spacing:-0.310px;-webkit-text-stroke:0.08px;">Flash</span>
<span class="t" style="left:597.50px;top:88.20px;font-size:8.40px;line-height:8.40px;color:#444;letter-spacing:0.057px;-webkit-text-stroke:0.08px;">Fill</span>
<span class="t" style="left:623.80px;top:76.80px;font-size:8.40px;line-height:8.40px;color:#444;letter-spacing:-0.075px;-webkit-text-stroke:0.08px;">Remove</span>
<span class="t" style="left:619.60px;top:88.20px;font-size:8.40px;line-height:8.40px;color:#444;letter-spacing:0.043px;-webkit-text-stroke:0.08px;">Duplicates</span>
<span class="t" style="left:676.50px;top:76.80px;font-size:8.40px;line-height:8.40px;color:#444;letter-spacing:0.219px;-webkit-text-stroke:0.08px;">Data</span>
<span class="t" style="left:662.20px;top:88.20px;font-size:8.40px;line-height:8.40px;color:#444;letter-spacing:0.215px;-webkit-text-stroke:0.08px;">Validation</span>
<span class="t" style="left:711.70px;top:76.80px;font-size:8.40px;line-height:8.40px;color:#444;letter-spacing:0.074px;-webkit-text-stroke:0.08px;">Consolidate</span>
<span class="t" style="left:760.10px;top:76.80px;font-size:8.40px;line-height:8.40px;color:#b1b1b1;letter-spacing:-0.002px;-webkit-text-stroke:0.08px;">Relationships</span>
<span class="t" style="left:296.60px;top:53.70px;font-size:8.40px;line-height:8.40px;color:#444;letter-spacing:0.011px;">Queries &amp; Connections</span>
<span class="t" style="left:296.60px;top:70.80px;font-size:8.40px;line-height:8.40px;color:#b1b1b1;letter-spacing:0.013px;">Properties</span>
<span class="t" style="left:296.60px;top:88.20px;font-size:8.40px;line-height:8.40px;color:#b1b1b1;letter-spacing:-0.091px;">Edit Links</span>
<span class="t" style="left:497.90px;top:53.70px;font-size:8.40px;line-height:8.40px;color:#b1b1b1;letter-spacing:-0.143px;">Clear</span>
<span class="t" style="left:497.90px;top:70.80px;font-size:8.40px;line-height:8.40px;color:#b1b1b1;letter-spacing:0.080px;">Reapply</span>
<span class="t" style="left:497.90px;top:88.20px;font-size:8.40px;line-height:8.40px;color:#444;letter-spacing:0.149px;">Advanced</span>
<span class="t" style="left:84.60px;top:105.59px;font-size:7.60px;line-height:7.60px;color:#444;letter-spacing:-0.048px;-webkit-text-stroke:0.1px;">Get &amp; Transform Data</span>
<span class="t" style="left:279.80px;top:105.59px;font-size:7.60px;line-height:7.60px;color:#444;letter-spacing:-0.057px;-webkit-text-stroke:0.1px;">Queries &amp; Connections</span>
<span class="t" style="left:449.70px;top:105.59px;font-size:7.60px;line-height:7.60px;color:#444;letter-spacing:-0.001px;-webkit-text-stroke:0.1px;">Sort &amp; Filter</span>
<span class="t" style="left:687.80px;top:105.59px;font-size:7.60px;line-height:7.60px;color:#444;letter-spacing:-0.007px;-webkit-text-stroke:0.1px;">Data Tools</span>
<svg class="r" style="left:28.10px;top:91.30px" width="4.4" height="3" viewBox="0 0 4.4 3"><path d="M0.5 0.5L2.2 2.2L3.9 0.5" fill="none" stroke="#444" stroke-width="1"/></svg>
<svg class="r" style="left:268.80px;top:91.30px" width="4.4" height="3" viewBox="0 0 4.4 3"><path d="M0.5 0.5L2.2 2.2L3.9 0.5" fill="none" stroke="#b1b1b1" stroke-width="1"/></svg>
<svg class="r" style="left:703.20px;top:91.30px" width="4.4" height="3" viewBox="0 0 4.4 3"><path d="M0.5 0.5L2.2 2.2L3.9 0.5" fill="none" stroke="#444" stroke-width="1"/></svg>
<div class="r" style="left:184.90px;top:52.50px;width:0.80px;height:47.00px;background:#dadada;"></div>
<div class="r" style="left:243.20px;top:49.70px;width:0.90px;height:62.00px;background:#d4d4d4;"></div>
<div class="r" style="left:393.60px;top:49.70px;width:0.90px;height:62.00px;background:#d4d4d4;"></div>
<div class="r" style="left:449.00px;top:52.00px;width:0.80px;height:44.00px;background:#dcdcdc;"></div>
<div class="r" style="left:546.40px;top:49.70px;width:0.90px;height:62.00px;background:#d4d4d4;"></div>
<svg class="r" style="left:0;top:0" width="800" height="466" viewBox="0 0 800 466"><path d="M15 56.2V67.5A5.75 2.4 0 0 0 26.5 67.5V56.2Z" fill="#686868"/><ellipse cx="20.75" cy="56.2" rx="5.75" ry="2.4" fill="#8f8f8f"/><path d="M13.58 50.30 L17.00 50.30 L14.11 55.68 L16.24 55.68 L9.78 63.10 L12.29 57.34 L10.31 57.34Z" fill="#f0b24e"/><rect x="21" y="63.6" width="11" height="9.8" fill="#fff" stroke="#8c8c8c" stroke-width="0.8"/><rect x="21" y="63.6" width="11" height="2.6" fill="#2e75b6"/><path d="M21 68.6H32M21 71H32M24.7 66.2V73.4M28.4 66.2V73.4" stroke="#a9a9a9" stroke-width="0.7" fill="none"/><path d="M46.40 52.60H56.60L60.80 56.80V71.60H46.40Z" fill="#fff" stroke="#a8a8a8" stroke-width="0.90" stroke-linejoin="round"/><path d="M56.60 52.60V56.80H60.80" fill="none" stroke="#a8a8a8" stroke-width="0.90"/><rect x="56.6" y="63.4" width="9.2" height="9.8" fill="#fff" stroke="#9c9c9c" stroke-width="0.9"/><path d="M58.8 67H63.6M58.8 69.4H63.6" stroke="#c8c8c8" stroke-width="1.4"/><path d="M80.30 52.60H90.50L94.70 56.80V71.60H80.30Z" fill="#fff" stroke="#a8a8a8" stroke-width="0.90" stroke-linejoin="round"/><path d="M90.50 52.60V56.80H94.70" fill="none" stroke="#a8a8a8" stroke-width="0.90"/><circle cx="93.4" cy="68.1" r="5.4" fill="#fff" stroke="#3f7fc6" stroke-width="1.1"/><ellipse cx="93.4" cy="68.1" rx="2.5" ry="5.4" fill="none" stroke="#5b94d2" stroke-width="0.7"/><path d="M88 68.1H98.8M93.4 62.7V73.5M88.9 65.3H97.9M88.9 70.9H97.9" stroke="#5b94d2" stroke-width="0.7" fill="none"/><rect x="116.3" y="51.6" width="20.6" height="20.8" fill="#fff" stroke="#a2a2a2" stroke-width="0.9"/><rect x="115.9" y="51.3" width="21.4" height="3.7" fill="#2e75b6"/><path d="M118.2 52.1H121L119.6 53.9ZM125 52.1H127.8L126.4 53.9ZM132 52.1H134.8L133.4 53.9Z" fill="#fff"/><path d="M123 54.9V72.4M130 54.9V72.4M116 57.82H137M116 60.74H137M116 63.66H137M116 66.58H137M116 69.50H137" stroke="#a9a9a9" stroke-width="0.8" fill="none"/><path d="M159.10 52.60H169.30L173.50 56.80V71.60H159.10Z" fill="#fff" stroke="#a8a8a8" stroke-width="0.90" stroke-linejoin="round"/><path d="M169.30 52.60V56.80H173.50" fill="none" stroke="#a8a8a8" stroke-width="0.90"/><circle cx="172.1" cy="67.6" r="5.3" fill="#fff" stroke="#6ea3da" stroke-width="1.1"/><path d="M172.1 64.4V67.9H174.6" stroke="#8a8a8a" stroke-width="0.9" fill="none"/><path d="M206.40 52.40H216.80L221.00 56.60V71.60H206.40Z" fill="#fff" stroke="#9a9a9a" stroke-width="0.90" stroke-linejoin="round"/><path d="M216.80 52.40V56.60H221.00" fill="none" stroke="#9a9a9a" stroke-width="0.90"/><path d="M208.6 57H216M208.6 59.4H218.6M208.6 61.8H215M208.6 64.2H215M208.6 66.6H215M208.6 69H215" stroke="#c4c4c4" stroke-width="0.9"/><path d="M216 62.8V71A4.7 1.9 0 0 0 225.4 71V62.8Z" fill="#e9b75c"/><ellipse cx="220.7" cy="62.8" rx="4.7" ry="1.9" fill="#f4d48f"/><path d="M256 52.3H266V71.2H256Z" fill="#e4e3e9" stroke="#d4d3da" stroke-width="0.8"/><path d="M257.6 51.6H268.2L272.6 56V72.2H257.6Z" fill="#eceaf1" stroke="#d0cfd6" stroke-width="0.9"/><path d="M268.2 51.6V56H272.6" fill="none" stroke="#d0cfd6" stroke-width="0.9"/><circle cx="271.4" cy="68.2" r="5.6" fill="#f0eff3"/><path d="M267.4 67.4A4.1 4.1 0 0 1 275 65.8M275.4 69A4.1 4.1 0 0 1 267.8 70.6" fill="none" stroke="#b8b8b8" stroke-width="1.8"/><path d="M276.4 63.8V67H273.2ZM266.4 72.6V69.4H269.6Z" fill="#bcbcbc"/><rect x="283.3" y="52.4" width="10.4" height="10" fill="#fff" stroke="#787878" stroke-width="0.8"/><rect x="282.85" y="51.9" width="11.3" height="2.4" fill="#2e75b6"/><path d="M290 54.3V62.4M291.2 56.6H293M291.2 58.6H293M291.2 60.6H293" stroke="#8a8a8a" stroke-width="0.7" fill="none"/><rect x="284.3" y="69.4" width="9.2" height="10.2" fill="#f6f6f6" stroke="#c2c2c2" stroke-width="0.9"/><path d="M284.3 70.6H293.5" stroke="#bdbdbd" stroke-width="1.4"/><path d="M285.8 73.3H286.8M285.8 75.5H286.8M285.8 77.7H286.8M288 73.3H292.2M288 75.5H292.2M288 77.7H292.2" stroke="#c2c2c2" stroke-width="0.9"/><path d="M284.40 86.80H290.20L293.00 89.60V97.00H284.40Z" fill="#f6f6f6" stroke="#c0c0c0" stroke-width="0.90" stroke-linejoin="round"/><path d="M290.20 86.80V89.60H293.00" fill="none" stroke="#c0c0c0" stroke-width="0.90"/><rect x="285.6" y="93.8" width="4.4" height="3" rx="1.5" fill="#f3f3f3" stroke="#b4b4b4" stroke-width="0.9"/><rect x="288.6" y="93.8" width="4.6" height="3" rx="1.5" fill="none" stroke="#b4b4b4" stroke-width="0.9"/><text x="406.10" y="62.50" font-size="6.3" font-weight="normal" fill="#2e75b6" text-anchor="middle" font-family="Liberation Sans,sans-serif">A</text><text x="406.10" y="68.70" font-size="6.3" font-weight="normal" fill="#8e4bb0" text-anchor="middle" font-family="Liberation Sans,sans-serif">Z</text><path d="M411.1 58.4V67.4M409.2 65.6L411.1 67.8L413 65.6" stroke="#6a6a6a" stroke-width="0.85" fill="none"/><text x="406.10" y="85.00" font-size="6.3" font-weight="normal" fill="#8e4bb0" text-anchor="middle" font-family="Liberation Sans,sans-serif">Z</text><text x="406.10" y="91.20" font-size="6.3" font-weight="normal" fill="#2e75b6" text-anchor="middle" font-family="Liberation Sans,sans-serif">A</text><path d="M411.1 81V90.2M409.2 88.4L411.1 90.6L413 88.4" stroke="#6a6a6a" stroke-width="0.85" fill="none"/><rect x="420.6" y="53.2" width="20.4" height="17" rx="1.2" fill="#fff" stroke="#9c9c9c" stroke-width="0.9"/><path d="M420.3 55.3V54A1.2 1.2 0 0 1 421.5 52.8H440.1A1.2 1.2 0 0 1 441.3 54V55.3Z" fill="#2e75b6"/><path d="M430.8 55.3V70.2" stroke="#9c9c9c" stroke-width="0.8"/><text x="425.80" y="61.90" font-size="6.8" font-weight="bold" fill="#8e4bb0" text-anchor="middle" font-family="Liberation Sans,sans-serif">Z</text><text x="425.80" y="68.00" font-size="6.8" font-weight="bold" fill="#2e75b6" text-anchor="middle" font-family="Liberation Sans,sans-serif">A</text><text x="435.80" y="61.90" font-size="6.8" font-weight="bold" fill="#2e75b6" text-anchor="middle" font-family="Liberation Sans,sans-serif">A</text><text x="435.80" y="68.00" font-size="6.8" font-weight="bold" fill="#8e4bb0" text-anchor="middle" font-family="Liberation Sans,sans-serif">Z</text><path d="M458 52.9H476.6V54.2L469.3 61.4V70.4H465.3V61.4L458 54.2Z" fill="#6d6d6d"/><path d="M458 52.9H476.6V54.1H458Z" fill="#8c8c8c"/><path d="M485 52.4H493.6L490.4 56V61H488.4V56Z" fill="#c3c3c3"/><path d="M491 58.6L495.4 62.8M495.4 58.6L491 62.8" stroke="#c3c3c3" stroke-width="1" fill="none"/><path d="M485 69.4H493.6L490.4 73V78H488.4V73Z" fill="#c3c3c3"/><path d="M490.2 76.4A2.9 2.9 0 1 0 492.4 72.2" stroke="#c6c6c6" stroke-width="1" fill="none"/><path d="M494.8 71.8V74.4H492.2Z" fill="#c6c6c6"/><path d="M484.8 86.4H494L490.6 90.2V95H488.4V90.2Z" fill="#6d6d6d"/><path d="M484.8 86.4H494V87.3H484.8Z" fill="#8c8c8c"/><path d="M488.6 97L495.6 90" stroke="#2e75b6" stroke-width="1.5" fill="none"/><rect x="560.5" y="58.5" width="10" height="11.8" fill="#f4f8fc" stroke="#9c9c9c" stroke-width="0.9"/><path d="M562.2 61H568.8M562.2 63.2H568.8M562.2 65.4H568.8M562.2 67.6H568.8" stroke="#9dc1e4" stroke-width="1.1"/><rect x="572.6" y="61.3" width="8" height="8.2" fill="#fff" stroke="#666" stroke-width="0.9"/><path d="M572.6 62.2H580.6" stroke="#666" stroke-width="1.2"/><path d="M574 64.6H576M577.4 64.6H579.4M574 67.2H576M577.4 67.2H579.4" stroke="#8db6de" stroke-width="1.6"/><path d="M576.7 62.5V69.4" stroke="#888" stroke-width="0.6"/><path d="M567.4 57.4A4.6 4.6 0 0 1 576.4 57.4V59" stroke="#2e75b6" stroke-width="1.3" fill="none"/><path d="M573.6 57.4L576.4 60.4L579.2 57.4" stroke="#2e75b6" stroke-width="1.3" fill="none"/><rect x="593.3" y="51.8" width="19" height="16.6" rx="0.8" fill="#fff" stroke="#ababab" stroke-width="0.9"/><path d="M593.3 55.6H612.3M593.3 59.6H612.3M593.3 63.8H612.3M598.2 51.8V68.4M608 51.8V68.4" stroke="#c2c2c2" stroke-width="0.8" fill="none"/><rect x="598.4" y="60.2" width="9.4" height="7.6" fill="#e2e2e2"/><rect x="598.3" y="55.9" width="9.7" height="3.6" fill="#fff" stroke="#4fa98a" stroke-width="0.9"/><path d="M609.98 59.80 L613.40 59.80 L610.51 65.34 L612.64 65.34 L606.18 73.00 L608.69 67.06 L606.71 67.06Z" fill="#f0b24e"/><rect x="628.6" y="53.00" width="7.6" height="3.1" fill="#2e75b6"/><rect x="628.6" y="56.50" width="7.6" height="3.1" fill="#f3b94f"/><rect x="628.6" y="60.00" width="7.6" height="3.1" fill="#2e75b6"/><rect x="628.6" y="63.50" width="7.6" height="3.1" fill="#f3b94f"/><rect x="628.6" y="67.00" width="7.6" height="3.1" fill="#2e75b6"/><path d="M637.4 62.2H640.6M639.2 60.6L640.9 62.2L639.2 63.8" stroke="#2e75b6" stroke-width="1" fill="none"/><rect x="642.5" y="53.2" width="7.4" height="17" fill="#fff" stroke="#9c9c9c" stroke-width="0.8"/><rect x="642.4" y="53" width="7.6" height="3.2" fill="#2e75b6"/><rect x="642.4" y="56.5" width="7.6" height="3.2" fill="#f3b94f"/><path d="M642.5 63.4H649.9M642.5 66.8H649.9" stroke="#ababab" stroke-width="0.8"/><rect x="675.2" y="55.8" width="12.6" height="4.4" rx="1" fill="#fff" stroke="#9c9c9c" stroke-width="0.9"/><rect x="675.2" y="64.6" width="11" height="4.4" rx="1" fill="#fff" stroke="#9c9c9c" stroke-width="0.9"/><path d="M686.6 57L689.4 59.8L695.6 53" stroke="#3c9d70" stroke-width="1.5" fill="none"/><circle cx="689.8" cy="67" r="2.9" fill="#fff" stroke="#dd5a45" stroke-width="1.2"/><path d="M687.8 65L691.8 69" stroke="#dd5a45" stroke-width="1.1"/><rect x="723.7" y="52.9" width="7.6" height="17.4" rx="0.8" fill="#fff" stroke="#9c9c9c" stroke-width="0.9"/><path d="M723.7 56.4H731.3M723.7 59.9H731.3M723.7 63.4H731.3M723.7 66.9H731.3" stroke="#a6a6a6" stroke-width="0.8"/><path d="M732.2 61.7H736.6M734.8 59.8L736.9 61.7L734.8 63.6" stroke="#2e75b6" stroke-width="1.1" fill="none"/><rect x="738.2" y="59.8" width="7.4" height="3.9" rx="0.6" fill="#fdf3f0" stroke="#e1755f" stroke-width="0.9"/><path d="M782.4 61.3L787.6 55.6M782.4 61.3L786.2 65.8" stroke="#c8c8c8" stroke-width="0.8" fill="none"/><rect x="774.8" y="57.6" width="7.8" height="7.4" fill="#eeeeee" stroke="#c6c6c6" stroke-width="0.8"/><rect x="774.8" y="57.6" width="7.8" height="1.8" fill="#c6c6c6"/><path d="M774.8 62.2H782.6" stroke="#d4d4d4" stroke-width="0.7"/><rect x="787.6" y="51.8" width="7.8" height="7.4" fill="#eeeeee" stroke="#c6c6c6" stroke-width="0.8"/><rect x="787.6" y="51.8" width="7.8" height="1.8" fill="#c6c6c6"/><path d="M787.6 56.4H795.4" stroke="#d4d4d4" stroke-width="0.7"/><rect x="786.2" y="62.3" width="7.8" height="7.4" fill="#eeeeee" stroke="#c6c6c6" stroke-width="0.8"/><rect x="786.2" y="62.3" width="7.8" height="1.8" fill="#c6c6c6"/><path d="M786.2 66.9H794.0" stroke="#d4d4d4" stroke-width="0.7"/></svg>
<div class="r" style="left:3.30px;top:122.20px;width:70.00px;height:17.10px;background:#fff;box-sizing:border-box;border:0.7px solid #dadada;border-radius:1.5px;"></div>
<span class="t" style="left:7.40px;top:126.76px;font-size:9.90px;line-height:9.90px;color:#444;letter-spacing:-1.509px;">A1</span>
<svg class="r" style="left:66.50px;top:129.00px" width="5" height="3.5" viewBox="0 0 5 3.5"><path d="M0.4 0.4H4.6L2.5 3Z" fill="#555"/></svg>
<div class="r" style="left:78.00px;top:122.40px;width:722.00px;height:16.70px;background:#fff;box-sizing:border-box;border-top:0.7px solid #d6d6d6;border-bottom:0.7px solid #d0d0d0;"></div>
<div class="r" style="left:70.70px;top:122.20px;width:432.90px;height:308.40px;background:#f0f0f0;box-sizing:border-box;border:0.8px solid #9a9a9a;box-shadow:0 1.5px 7px 1px rgba(0,0,0,0.36);"></div>
<div class="r" style="left:71.50px;top:123.00px;width:431.30px;height:20.70px;background:#fff;"></div>
<span class="t" style="left:76.10px;top:129.40px;font-size:8.80px;line-height:8.80px;color:#111;letter-spacing:-0.123px;">Convert Text to Columns Wizard - Step 2 of 3</span>
<span class="t" style="left:451.30px;top:129.10px;font-size:8.60px;line-height:8.60px;color:#222;">?</span>
<svg class="r" style="left:481.60px;top:128.60px" width="9.4" height="9.4" viewBox="0 0 9.4 9.4"><path d="M0.9 0.9L8.5 8.5M8.5 0.9L0.9 8.5" stroke="#222" stroke-width="0.8" fill="none"/></svg>
<span class="t" style="left:76.50px;top:150.94px;font-size:7.90px;line-height:7.90px;color:#1c1c1c;letter-spacing:-0.157px;-webkit-text-stroke:0.1px;">This screen lets you set the delimiters your data contains.  You can see how your text is affected in the preview below.</span>
<div class="r" style="left:77.20px;top:173.30px;width:83.40px;height:85.00px;box-sizing:border-box;border:0.8px solid #dcdcdc;"></div>
<div class="r" style="left:80.20px;top:169.30px;width:36.30px;height:8.00px;background:#f0f0f0;"></div>
<span class="t" style="left:81.80px;top:169.84px;font-size:7.90px;line-height:7.90px;color:#1c1c1c;letter-spacing:-0.246px;-webkit-text-stroke:0.1px;">Delimiters</span>
<div class="r" style="left:84.00px;top:183.50px;width:9.60px;height:9.60px;background:#fff;box-sizing:border-box;border:0.75px solid #5a5a5a;"></div>
<span class="t" style="left:96.60px;top:185.44px;font-size:7.90px;line-height:7.90px;color:#1c1c1c;letter-spacing:-0.368px;-webkit-text-stroke:0.1px;"><u>T</u>ab</span>
<div class="r" style="left:84.00px;top:198.00px;width:9.60px;height:9.60px;background:#fff;box-sizing:border-box;border:0.75px solid #5a5a5a;"></div>
<span class="t" style="left:96.60px;top:199.94px;font-size:7.90px;line-height:7.90px;color:#1c1c1c;letter-spacing:-0.298px;-webkit-text-stroke:0.1px;">Se<u>m</u>icolon</span>
<div class="r" style="left:84.00px;top:212.40px;width:9.60px;height:9.60px;background:#fff;box-sizing:border-box;border:0.75px solid #5a5a5a;"></div>
<span class="t" style="left:96.60px;top:214.34px;font-size:7.90px;line-height:7.90px;color:#1c1c1c;letter-spacing:-0.463px;-webkit-text-stroke:0.1px;"><u>C</u>omma</span>
<div class="r" style="left:84.00px;top:226.90px;width:9.60px;height:9.60px;background:#fff;box-sizing:border-box;border:0.75px solid #2a7fd0;"></div>
<svg class="r" style="left:84.00px;top:226.90px" width="9.6" height="9.6" viewBox="0 0 9.6 9.6"><path d="M2 4.8L4 6.8L7.5 2.6" stroke="#0f78d4" stroke-width="1.05" fill="none"/></svg>
<span class="t" style="left:96.60px;top:228.84px;font-size:7.90px;line-height:7.90px;color:#1c1c1c;letter-spacing:-0.650px;-webkit-text-stroke:0.1px;"><u>S</u>pace</span>
<div class="r" style="left:84.00px;top:242.00px;width:9.60px;height:9.60px;background:#fff;box-sizing:border-box;border:0.75px solid #5a5a5a;"></div>
<span class="t" style="left:96.60px;top:243.94px;font-size:7.90px;line-height:7.90px;color:#1c1c1c;letter-spacing:-0.270px;-webkit-text-stroke:0.1px;"><u>O</u>ther:</span>
<div class="r" style="left:95.40px;top:182.80px;width:14.40px;height:11.40px;box-sizing:border-box;border:0.6px solid #8c8c8c;"></div>
<div class="r" style="left:128.30px;top:240.40px;width:25.40px;height:14.20px;background:#fff;box-sizing:border-box;border:0.8px solid #c9c9c9;"></div>
<div class="r" style="left:169.70px;top:196.40px;width:9.60px;height:9.60px;background:#fff;box-sizing:border-box;border:0.75px solid #5a5a5a;"></div>
<svg class="r" style="left:169.70px;top:196.40px" width="9.6" height="9.6" viewBox="0 0 9.6 9.6"><path d="M2 4.8L4 6.8L7.5 2.6" stroke="#222" stroke-width="0.9" fill="none"/></svg>
<span class="t" style="left:181.90px;top:198.34px;font-size:7.90px;line-height:7.90px;color:#1c1c1c;letter-spacing:-0.190px;-webkit-text-stroke:0.1px;">T<u>r</u>eat consecutive delimiters as one</span>
<span class="t" style="left:170.00px;top:220.94px;font-size:7.90px;line-height:7.90px;color:#1c1c1c;letter-spacing:-0.124px;-webkit-text-stroke:0.1px;">Text <u>q</u>ualifier:</span>
<div class="r" style="left:222.20px;top:215.80px;width:80.20px;height:15.80px;background:#fff;box-sizing:border-box;border:0.8px solid #b4b4b4;"></div>
<div class="r" style="left:290.40px;top:216.60px;width:11.30px;height:14.10px;background:#e5e5e5;box-sizing:border-box;border:0.8px solid #b0b0b0;"></div>
<svg class="r" style="left:293.00px;top:222.00px" width="6.2" height="4" viewBox="0 0 6.2 4"><path d="M0.6 0.6L3.1 3.1L5.6 0.6" stroke="#444" stroke-width="0.85" fill="none"/></svg>
<span class="t" style="left:226.00px;top:219.74px;font-size:7.90px;line-height:7.90px;color:#1c1c1c;">&quot;</span>
<div class="r" style="left:76.40px;top:295.00px;width:421.90px;height:103.60px;box-sizing:border-box;border:0.8px solid #dcdcdc;"></div>
<div class="r" style="left:80.00px;top:291.00px;width:47.00px;height:8.00px;background:#f0f0f0;"></div>
<span class="t" style="left:81.60px;top:291.54px;font-size:7.90px;line-height:7.90px;color:#1c1c1c;letter-spacing:-0.227px;-webkit-text-stroke:0.1px;">Data <u>p</u>review</span>
<div class="r" style="left:83.90px;top:322.20px;width:394.20px;height:60.80px;background:#fff;"></div>
<div class="r" style="left:83.90px;top:322.20px;width:394.20px;height:0.90px;background:#5a5a5a;"></div>
<div class="r" style="left:83.90px;top:322.20px;width:0.90px;height:60.30px;background:#5a5a5a;"></div>
<div class="r" style="left:477.20px;top:322.20px;width:0.90px;height:60.30px;background:#5a5a5a;"></div>
<div class="r" style="left:106.90px;top:323.00px;width:0.90px;height:59.50px;background:#4a4a4a;"></div>
<span class="t" style="left:84.50px;top:326.84px;font-size:7.50px;line-height:7.50px;color:#4c4c4c;letter-spacing:0.048px;font-family:'Liberation Mono',monospace;">Row</span>
<span class="t" style="left:107.60px;top:326.84px;font-size:7.50px;line-height:7.50px;color:#4c4c4c;letter-spacing:-0.202px;font-family:'Liberation Mono',monospace;">10</span>
<span class="t" style="left:84.50px;top:336.04px;font-size:7.50px;line-height:7.50px;color:#4c4c4c;letter-spacing:0.048px;font-family:'Liberation Mono',monospace;">Row</span>
<span class="t" style="left:107.60px;top:336.04px;font-size:7.50px;line-height:7.50px;color:#4c4c4c;letter-spacing:-0.202px;font-family:'Liberation Mono',monospace;">11</span>
<span class="t" style="left:84.50px;top:345.14px;font-size:7.50px;line-height:7.50px;color:#4c4c4c;letter-spacing:0.048px;font-family:'Liberation Mono',monospace;">Row</span>
<span class="t" style="left:107.60px;top:345.14px;font-size:7.50px;line-height:7.50px;color:#4c4c4c;letter-spacing:-0.202px;font-family:'Liberation Mono',monospace;">12</span>
<span class="t" style="left:84.50px;top:354.34px;font-size:7.50px;line-height:7.50px;color:#4c4c4c;letter-spacing:0.048px;font-family:'Liberation Mono',monospace;">Row</span>
<span class="t" style="left:107.60px;top:354.34px;font-size:7.50px;line-height:7.50px;color:#4c4c4c;letter-spacing:-0.202px;font-family:'Liberation Mono',monospace;">13</span>
<span class="t" style="left:84.50px;top:363.54px;font-size:7.50px;line-height:7.50px;color:#4c4c4c;letter-spacing:0.048px;font-family:'Liberation Mono',monospace;">Row</span>
<span class="t" style="left:107.60px;top:363.54px;font-size:7.50px;line-height:7.50px;color:#4c4c4c;letter-spacing:-0.202px;font-family:'Liberation Mono',monospace;">14</span>
<span class="t" style="left:84.50px;top:372.74px;font-size:7.50px;line-height:7.50px;color:#4c4c4c;letter-spacing:0.048px;font-family:'Liberation Mono',monospace;">Row</span>
<span class="t" style="left:107.60px;top:372.74px;font-size:7.50px;line-height:7.50px;color:#4c4c4c;letter-spacing:-0.202px;font-family:'Liberation Mono',monospace;">15</span>
<div class="r" style="left:478.40px;top:358.40px;width:11.30px;height:11.60px;background:#cdcdcd;"></div>
<svg class="r" style="left:480.60px;top:326.40px" width="7" height="4.6" viewBox="0 0 7 4.6"><path d="M1 3.9L3.5 1.2L6 3.9" stroke="#4a4a4a" stroke-width="1.15" fill="none"/></svg>
<svg class="r" style="left:480.60px;top:373.40px" width="7" height="4.6" viewBox="0 0 7 4.6"><path d="M1 0.7L3.5 3.4L6 0.7" stroke="#4a4a4a" stroke-width="1.15" fill="none"/></svg>
<svg class="r" style="left:88.00px;top:385.60px" width="3.6" height="6" viewBox="0 0 3.6 6"><path d="M3 0.6L0.7 3L3 5.4" stroke="#c2c2c2" stroke-width="0.8" fill="none"/></svg>
<svg class="r" style="left:470.40px;top:385.60px" width="3.6" height="6" viewBox="0 0 3.6 6"><path d="M0.6 0.6L2.9 3L0.6 5.4" stroke="#c2c2c2" stroke-width="0.8" fill="none"/></svg>
<div class="r" style="left:214.70px;top:408.20px;width:64.00px;height:16.50px;background:#e1e1e1;box-sizing:border-box;border:0.8px solid #b8b8b8;"></div>
<span class="t" style="left:235.60px;top:412.99px;font-size:7.90px;line-height:7.90px;color:#1c1c1c;letter-spacing:-0.478px;-webkit-text-stroke:0.1px;">Cancel</span>
<div class="r" style="left:287.20px;top:408.20px;width:64.50px;height:16.50px;background:#e1e1e1;box-sizing:border-box;border:0.8px solid #b8b8b8;"></div>
<span class="t" style="left:308.45px;top:412.99px;font-size:7.90px;line-height:7.90px;color:#1c1c1c;letter-spacing:-0.474px;-webkit-text-stroke:0.1px;">&lt; <u>B</u>ack</span>
<div class="r" style="left:360.30px;top:408.20px;width:64.30px;height:16.50px;background:#e1e1e1;box-sizing:border-box;border:1.4px solid #0f78d4;"></div>
<span class="t" style="left:381.15px;top:412.99px;font-size:7.90px;line-height:7.90px;color:#1c1c1c;letter-spacing:-0.090px;-webkit-text-stroke:0.1px;"><u>N</u>ext &gt;</span>
<div class="r" style="left:433.10px;top:408.20px;width:64.60px;height:16.50px;background:#e1e1e1;box-sizing:border-box;border:0.8px solid #b8b8b8;"></div>
<span class="t" style="left:456.00px;top:412.99px;font-size:7.90px;line-height:7.90px;color:#1c1c1c;letter-spacing:-0.454px;-webkit-text-stroke:0.1px;"><u>F</u>inish</span>
<span class="t" style="left:567.60px;top:407.28px;font-size:33.00px;line-height:33.00px;color:#828282;letter-spacing:0.059px;">fthemes.net</span>
</div>
</body></html>
